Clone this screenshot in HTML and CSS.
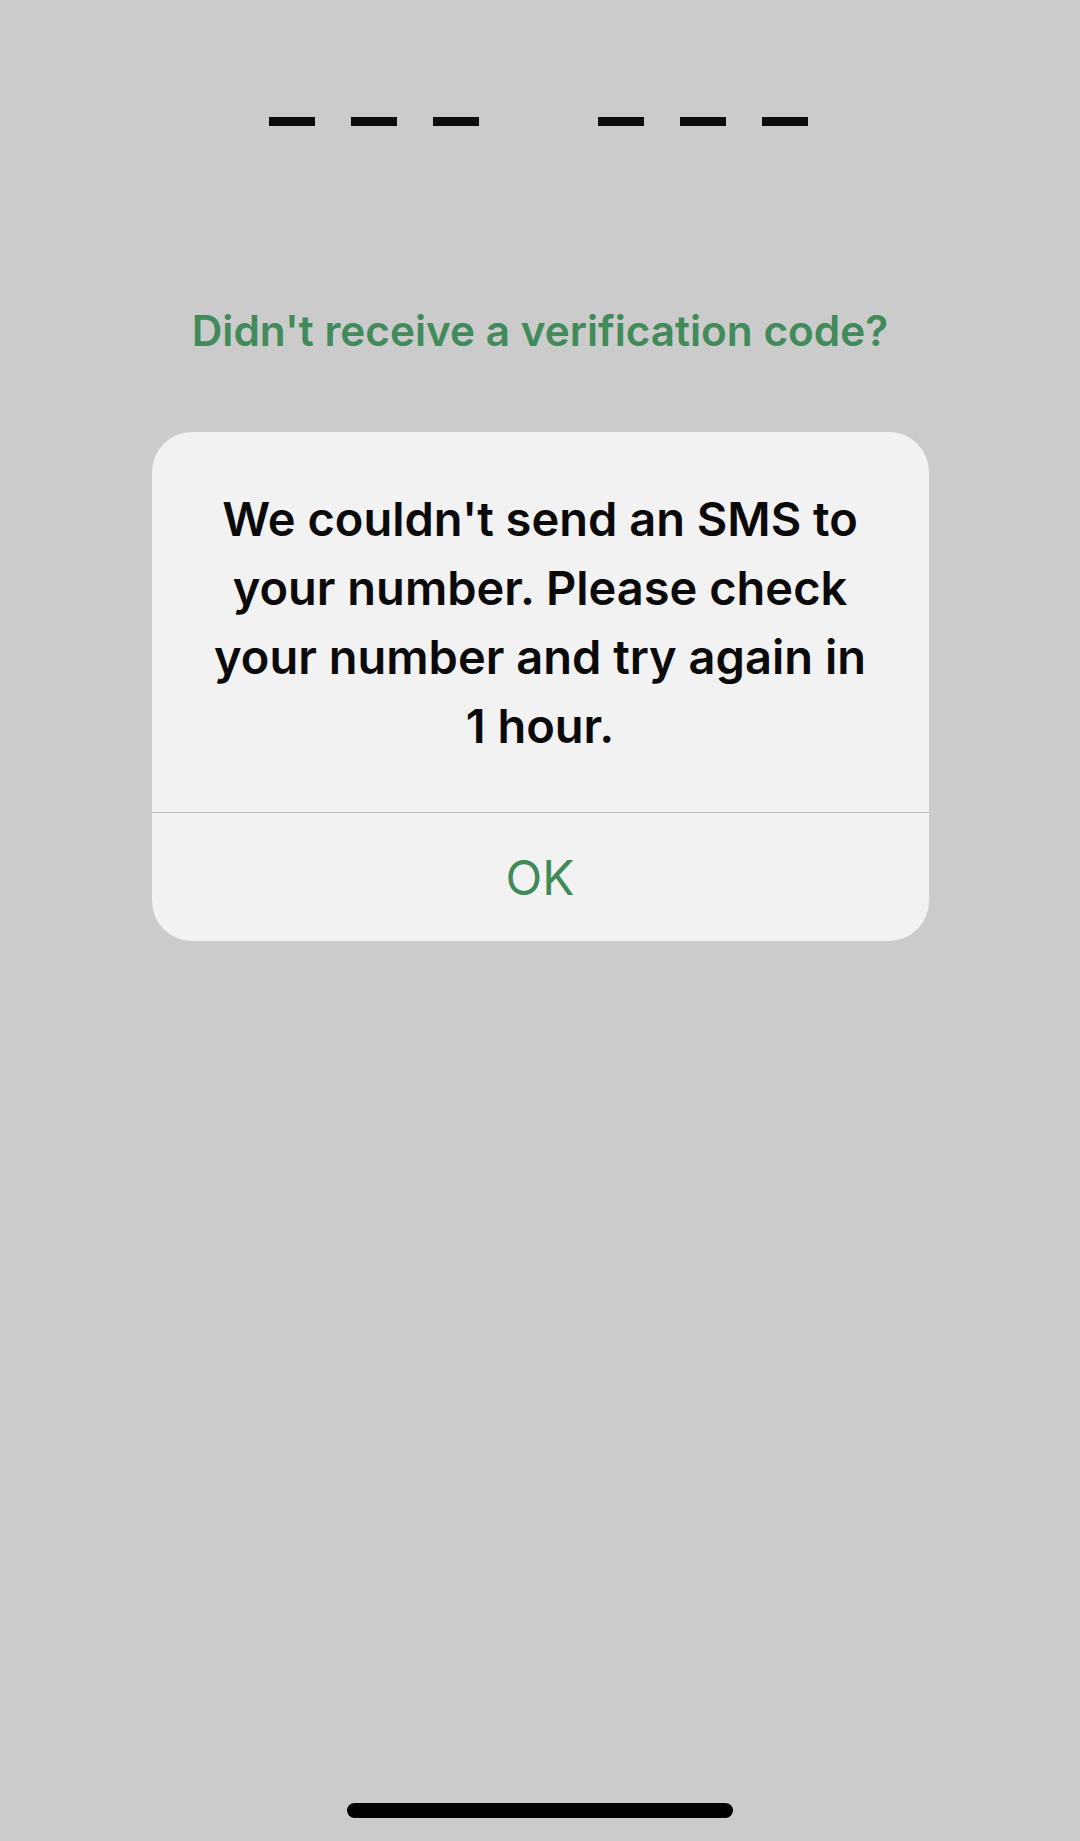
FILE: index.html
```html
<!DOCTYPE html>
<html>
<head>
  <meta charset="utf-8">
  <title>Verify number</title>
  <link rel="stylesheet" href="styles.css">
</head>
<body>
  <div class="screen">
    <!-- six empty code slots, split 3 + 3 -->
    <div class="code">
      <div class="code-group">
        <span class="slot"></span>
        <span class="slot"></span>
        <span class="slot"></span>
      </div>
      <div class="code-group">
        <span class="slot"></span>
        <span class="slot"></span>
        <span class="slot"></span>
      </div>
    </div>

    <div class="resend">Didn't receive a verification code?</div>

    <div class="alert">
      <div class="alert-title">We couldn't send an SMS to your number. Please check your number and try again in 1 hour.</div>
      <div class="alert-actions">
        <button class="alert-btn">OK</button>
      </div>
    </div>

    <div class="home-bar"></div>
  </div>
</body>
</html>
```

FILE: styles.css
```css
body {
  margin: 0;
  background: #cbcbcb;
  font-family: "Inter", "Roboto", "Liberation Sans", sans-serif;
}

.screen {
  display: flex;
  flex-direction: column;
  align-items: center;
  min-height: 1841px;
}

.code {
  display: flex;
  gap: 119px;
  margin-top: 117px;
  padding-right: 4px;
}
.code-group {
  display: flex;
  gap: 36px;
}
.slot {
  display: block;
  width: 46px;
  height: 9px;
  background: #0c0c0c;
}

.resend {
  margin-top: 175px;
  line-height: 60px;
  font-size: 42.3px;
  font-weight: 600;
  color: #418a5a;
}

.alert {
  margin-top: 71px;
  width: 777px;
  background: #f2f2f2;
  border-radius: 40px;
  overflow: hidden;
}
.alert-title {
  padding: 52px 50px 52px;
  text-align: center;
  font-size: 47px;
  line-height: 69px;
  font-weight: 600;
  color: #0a0a0a;
}
.alert-actions {
  border-top: 1px solid #bcbcbc;
}
.alert-btn {
  display: block;
  width: 100%;
  height: 128px;
  border: none;
  background: none;
  padding: 0;
  font-family: inherit;
  font-size: 48px;
  color: #418a5a;
  cursor: pointer;
}

.home-bar {
  margin-top: auto;
  margin-bottom: 23px;
  width: 386px;
  height: 15px;
  border-radius: 8px;
  background: #000;
}
```
